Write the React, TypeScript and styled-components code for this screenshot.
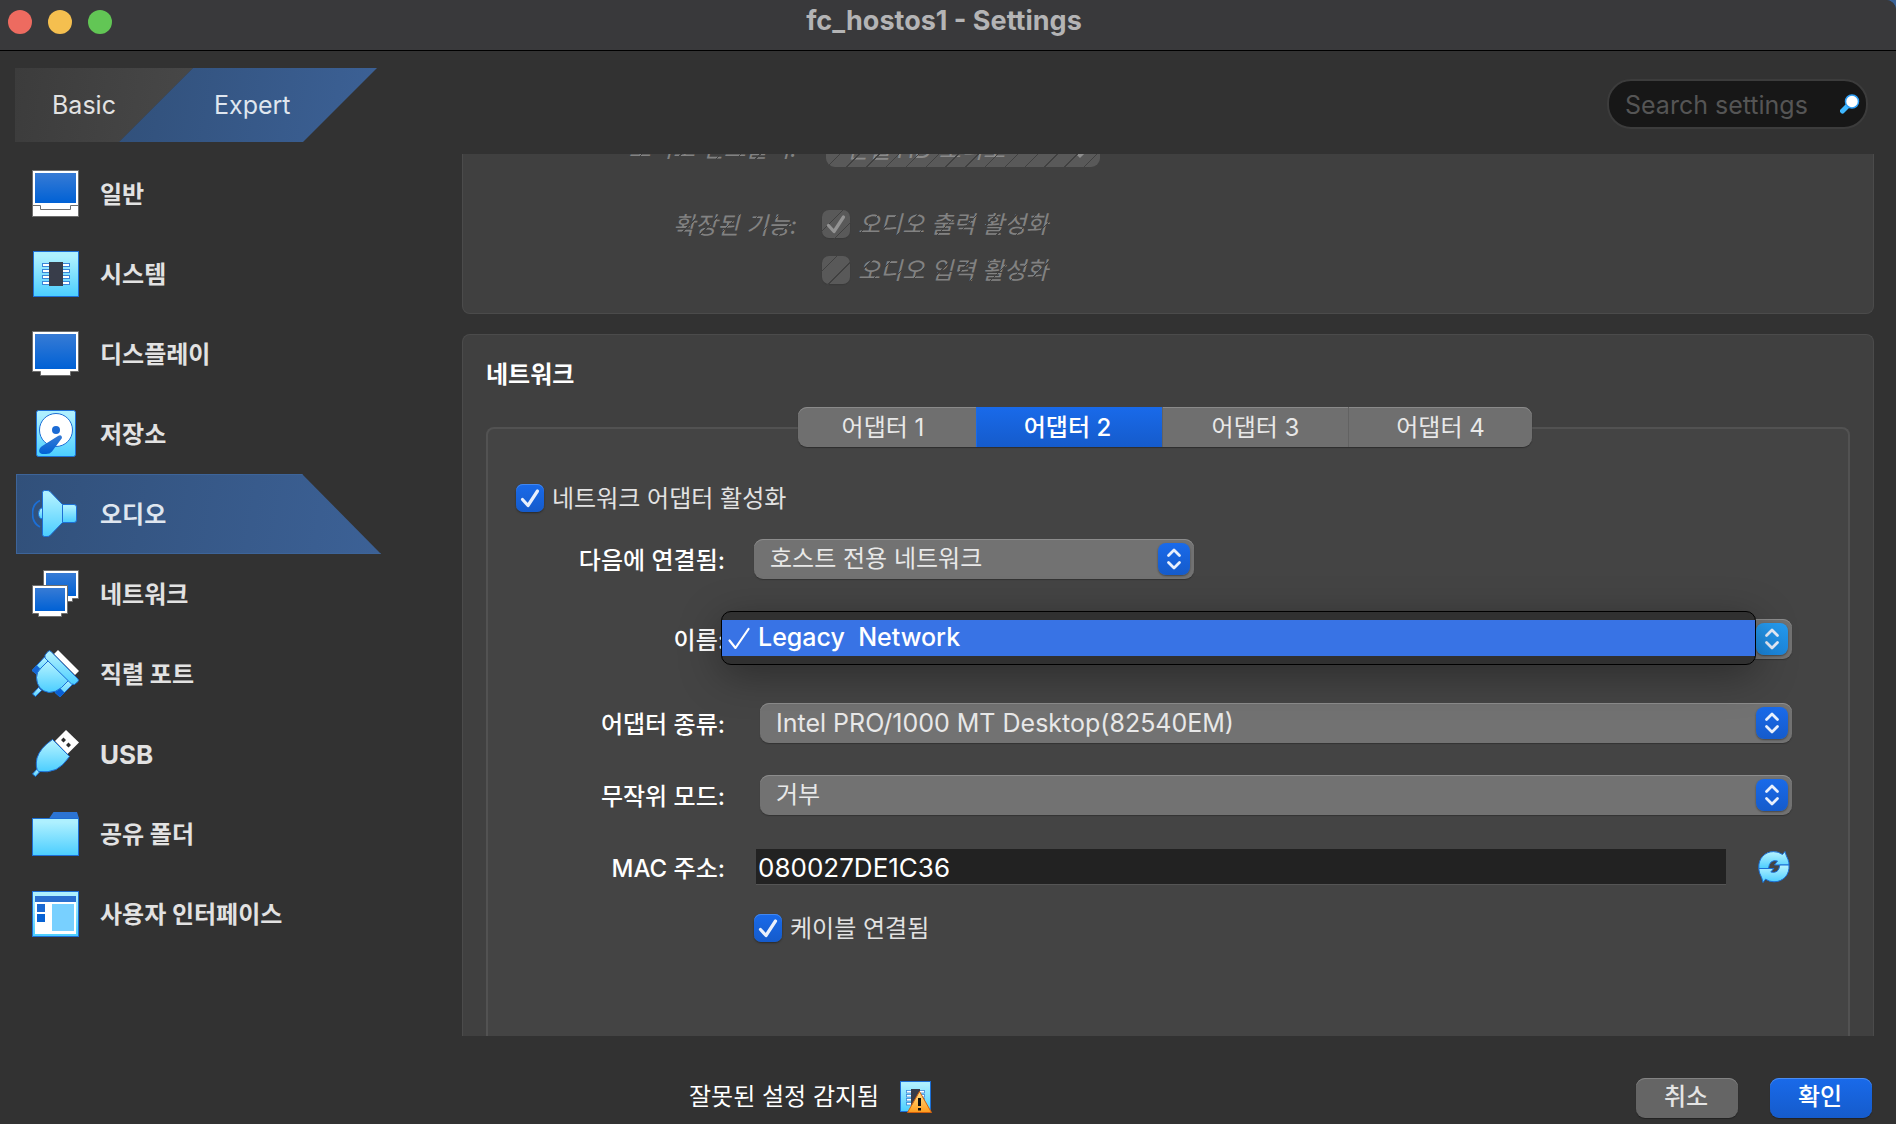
import React, { useState } from "react";
import styled, { createGlobalStyle, css } from "styled-components";

const GlobalStyle = createGlobalStyle`
  *, *::before, *::after { box-sizing: border-box; }
  body { margin: 0; background: #3a6296; }
  button, input, select { font: inherit; color: inherit; margin: 0; }
`;

const accent = "linear-gradient(#196aea, #155bcb)";
const selection = "linear-gradient(100deg, #31507a, #3c6196)";

/* ---------- window ---------- */

const Window = styled.div`
  display: flex;
  flex-direction: column;
  min-height: 100vh;
  border-top-right-radius: 10px;
  overflow: hidden;
  background: #323232;
  color: #e2e2e2;
  font-family: Inter, "Noto Sans CJK KR", sans-serif;
  font-size: 24px;
  line-height: 32px;
`;

const TitleBar = styled.header`
  display: grid;
  grid-template-columns: 1fr auto 1fr;
  height: 51px;
  padding: 0 8px;
  background: #39393b;
  border-bottom: 1px solid #000;
`;

const Lights = styled.div`
  display: flex;
  gap: 16px;
  padding-top: 10px;
`;

const Light = styled.button<{ $color: string }>`
  width: 24px;
  height: 24px;
  padding: 0;
  border: 0;
  border-radius: 50%;
  background: ${(p) => p.$color};
`;

const WindowTitle = styled.h1`
  margin: 0;
  padding: 5px 8px 0 0;
  font-size: 27px;
  line-height: 32px;
  font-weight: 700;
  color: #b4b4b5;
`;

const Header = styled.div`
  display: flex;
  justify-content: space-between;
  align-items: flex-start;
  padding: 17px 28px 12px 15px;
`;

const Modes = styled.div`
  display: flex;
  height: 74px;
`;

const Mode = styled.button<{ $active?: boolean }>`
  border: 0;
  text-align: left;
  font-size: 25px;
  ${(p) =>
    p.$active
      ? css`
          width: 258px;
          margin-left: -74px;
          padding: 0 0 0 95px;
          color: #dfe6ef;
          background: ${selection};
          clip-path: polygon(74px 0, 100% 0, 184px 100%, 0 100%);
        `
      : css`
          width: 178px;
          padding: 0 0 0 37px;
          color: #e2e2e2;
          background: linear-gradient(100deg, #3c3c3c, #484848);
          clip-path: polygon(0 0, 100% 0, 104px 100%, 0 100%);
        `}
`;

const SearchBox = styled.label`
  display: flex;
  align-items: center;
  width: 261px;
  height: 50px;
  margin-top: 11px;
  padding: 0 6px 0 16px;
  border: 2px solid #3c3c3c;
  border-radius: 24px;
  background: #171717;
`;

const SearchInput = styled.input`
  flex: 1;
  min-width: 0;
  padding: 2px 0 0;
  border: 0;
  outline: 0;
  background: none;
  font-size: 25px;
  &::placeholder { color: #555; opacity: 1; }
`;

const Body = styled.div`
  display: flex;
  flex: 1;
  min-height: 0;
`;

/* ---------- sidebar ---------- */

const Sidebar = styled.nav`
  flex: 0 0 462px;
  padding-left: 16px;
`;

const NavItem = styled.button<{ $active?: boolean }>`
  display: flex;
  align-items: center;
  gap: 20px;
  width: 365px;
  height: 80px;
  padding: 0 0 0 16px;
  border: 0;
  background: none;
  color: #e2e2e2;
  font-weight: 700;
  text-align: left;
  ${(p) =>
    p.$active &&
    css`
      background: ${selection};
      box-shadow: inset 0 0 0 1px #3d6499;
      clip-path: polygon(0 0, 286px 0, 100% 100%, 0 100%);
      color: #dfe6ef;
    `}
`;

const NavText = styled.span<{ $latin?: boolean }>`
  padding-top: 2px;
  font-size: ${(p) => (p.$latin ? 26 : 24)}px;
`;

/* ---------- panels ---------- */

const Content = styled.main`
  display: flex;
  flex: 1;
  flex-direction: column;
  gap: 20px;
  min-width: 0;
  margin-right: 22px;
  overflow: hidden;
`;

const Panel = styled.section`
  border: 1px solid #4b4b4b;
  background: #404040;
`;

const AudioPanel = styled(Panel)`
  position: relative;
  height: 160px;
  border-top: 0;
  border-radius: 0 0 8px 8px;
  overflow: hidden;
  color: #828282;
  font-style: italic;
`;

const Hatch = styled.div`
  position: absolute;
  inset: 0;
  pointer-events: none;
  background: repeating-linear-gradient(135deg, #404040 0 1px, transparent 1px 14px);
`;

const NetworkPanel = styled(Panel)`
  display: flex;
  flex: 1;
  flex-direction: column;
  padding: 24px 23px 0;
  border-bottom: 0;
  border-radius: 8px 8px 0 0;
`;

const PanelTitle = styled.h2`
  margin: 0 0 16px;
  font-size: 24px;
  line-height: 32px;
  font-weight: 700;
  color: #fff;
`;

const Tabs = styled.div`
  position: relative;
  z-index: 1;
  align-self: center;
  display: grid;
  grid-template-columns: 178px 186px 186px 184px;
  height: 40px;
  margin: 0 6px -20px 0;
  border-radius: 9px;
  overflow: hidden;
  background: #6f6f6f;
  box-shadow: 0 1px 1px #2e2e2e, inset 0 1px #8a8a8a;
`;

const Tab = styled.button<{ $active?: boolean }>`
  padding: 2px 0 0;
  border: 0;
  border-left: 1px solid #626262;
  background: none;
  color: #e8e8e8;
  &:first-child { padding-right: 8px; border-left: 0; }
  ${(p) =>
    p.$active &&
    css`
      padding-right: 4px;
      border-left-color: #196aea;
      background: ${accent};
      color: #fff;
      font-weight: 500;
    `}
`;

const Group = styled.div`
  flex: 1;
  padding: 55px 56px 0 0;
  border: 2px solid #525252;
  border-bottom: 0;
  border-radius: 8px 8px 0 0;
  background: #444;
`;

/* ---------- form ---------- */

const Row = styled.div<{ $top?: number; $indent?: number }>`
  display: flex;
  align-items: center;
  margin-top: ${(p) => p.$top ?? 0}px;
  padding-left: ${(p) => p.$indent ?? 0}px;
`;

const FieldLabel = styled.label<{ $gap?: number }>`
  flex: 0 0 237px;
  margin-right: ${(p) => p.$gap ?? 35}px;
  padding-top: 4px;
  text-align: right;
  font-weight: 500;
  color: #fff;
`;

const DimLabel = styled.label<{ $gap: number }>`
  flex: 0 0 334px;
  margin-right: ${(p) => p.$gap}px;
  padding-top: 4px;
  text-align: right;
`;

const CheckLabel = styled.label`
  display: flex;
  align-items: center;
  gap: 8px;
  height: 28px;
`;

const CheckText = styled.span`
  padding-top: 2px;
`;

const CheckCell = styled.span`
  display: grid;
  width: 28px;
  height: 28px;
  & > * { grid-area: 1 / 1; }
  & > svg { pointer-events: none; z-index: 1; }
`;

const CheckInput = styled.input`
  appearance: none;
  width: 28px;
  height: 28px;
  border-radius: 7px;
  background: #6b6b6b;
  box-shadow: 0 1px 2px rgba(0, 0, 0, 0.4);
  &:checked { background: ${accent}; box-shadow: 0 1px 2px rgba(0, 0, 0, 0.4), inset 0 1px #4287f0; }
  &:disabled { background: #595959; box-shadow: 0 1px 1px #3a3a3a; }
`;

const SelectWrap = styled.div<{ $width?: number }>`
  position: relative;
  ${(p) => (p.$width ? css`width: ${p.$width}px;` : css`flex: 1;`)}
`;

const SelectBox = styled.select<{ $latin?: boolean }>`
  display: block;
  appearance: none;
  width: 100%;
  height: 40px;
  padding: 0 40px 0 16px;
  border: 0;
  border-radius: 9px;
  background: #727272;
  box-shadow: 0 1px 1px #333, inset 0 1px #8c8c8c;
  color: #e8e8e8;
  font-size: ${(p) => (p.$latin ? 25 : 24)}px;
  &:disabled {
    padding: 6px 40px 0 20px;
    background: #595959;
    box-shadow: none;
    color: #8a8a8a;
    opacity: 1;
    font-style: italic;
  }
`;

const Stepper = styled.span<{ $open?: boolean }>`
  position: absolute;
  top: 4px;
  right: 4px;
  width: 32px;
  height: 32px;
  border-radius: 8px;
  pointer-events: none;
  background: ${(p) => (p.$open ? "linear-gradient(#259bf0, #1b86dc)" : accent)};
  box-shadow: 0 1px 2px rgba(0, 0, 0, 0.4);
  & > svg { display: block; }
`;

const DimChevron = styled.span`
  position: absolute;
  top: 4px;
  right: 10px;
  pointer-events: none;
`;

const Popup = styled.ul`
  position: absolute;
  z-index: 2;
  top: -8px;
  left: -39px;
  right: 36px;
  margin: 0;
  padding: 8px 0;
  list-style: none;
  border: 1px solid #000;
  border-radius: 10px;
  background: #303030;
  box-shadow: 0 10px 40px rgba(0, 0, 0, 0.35);
`;

const Option = styled.li`
  display: flex;
  align-items: center;
  gap: 8px;
  height: 36px;
  padding: 0 0 2px 6px;
  background: #3873e5;
  color: #fff;
  font-size: 25px;
  font-weight: 500;
  white-space: pre;
`;

const MacInput = styled.input`
  flex: 1;
  min-width: 0;
  height: 36px;
  padding: 2px 2px 0;
  border: 0;
  border-bottom: 1px solid #555;
  outline: 0;
  background: #222;
  color: #fff;
  font-size: 26px;
`;

const IconButton = styled.button`
  width: 32px;
  height: 32px;
  margin: 0 2px 0 32px;
  padding: 0;
  border: 0;
  background: none;
  & > svg { display: block; }
`;

/* ---------- footer ---------- */

const Footer = styled.footer`
  display: grid;
  grid-template-columns: 1fr auto;
  align-items: center;
  height: 88px;
  padding: 36px 24px 0 689px;
`;

const Warning = styled.div`
  display: flex;
  align-items: center;
  gap: 21px;
  height: 40px;
  padding-bottom: 2px;
  color: #fff;
`;

const Actions = styled.div`
  display: flex;
  gap: 32px;
  height: 52px;
  padding-top: 6px;
`;

const Action = styled.button<{ $primary?: boolean }>`
  width: 102px;
  height: 40px;
  padding: 0 2px 2px 0;
  border: 0;
  border-radius: 9px;
  background: ${(p) => (p.$primary ? accent : "#656565")};
  box-shadow: 0 1px 1px #222, inset 0 1px ${(p) => (p.$primary ? "#4a8cf2" : "#838383")};
  color: ${(p) => (p.$primary ? "#fff" : "#e4e4e4")};
  font-weight: 500;
`;

/* ---------- drawings ---------- */

const Defs = styled.svg`
  position: absolute;
`;

const Gradients = () => (
  <Defs width="0" height="0" aria-hidden="true">
    <defs>
      <linearGradient id="sky" x1="0" y1="0" x2="0" y2="1">
        <stop offset="0.1" stopColor="#aef0ff" />
        <stop offset="1" stopColor="#4bceff" />
      </linearGradient>
      <linearGradient id="blue" x1="0" y1="0" x2="0" y2="1">
        <stop offset="0" stopColor="#377bd5" />
        <stop offset="1" stopColor="#0061d5" />
      </linearGradient>
      <linearGradient id="amber" x1="0" y1="0" x2="0" y2="1">
        <stop offset="0" stopColor="#ffe08a" />
        <stop offset="1" stopColor="#ff9c1c" />
      </linearGradient>
    </defs>
  </Defs>
);

const edge = "#1c6fd6";
const grey = "#6e6e6e";

const art: Record<string, React.ReactNode> = {
  general: (
    <>
      <rect x="0.5" y="0.5" width="46" height="46" fill="#fff" stroke={grey} />
      <rect x="3" y="3" width="41" height="30" fill="url(#blue)" />
      <path d="M.5 35.5h8v4h30v-4h8" fill="none" stroke={grey} />
    </>
  ),
  system: (
    <>
      <rect x="1.5" y="1.5" width="45" height="45" fill="url(#sky)" stroke={edge} />
      {[13, 19, 25, 31].map((y) => (
        <rect key={y} x="10.5" y={y + 0.5} width="27" height="3" fill="#fff" stroke="#3a86d8" />
      ))}
      <rect x="17" y="12" width="14" height="24" fill="#383d4a" />
    </>
  ),
  display: (
    <>
      <path d="M.5 1.5h46v40h-8v4h-30v-4h-8z" fill="#fff" stroke={grey} />
      <rect x="3" y="4" width="41" height="35" fill="url(#blue)" />
    </>
  ),
  storage: (
    <>
      <rect x="4.5" y="0.5" width="39" height="46" rx="2" fill="url(#sky)" stroke={edge} />
      <circle cx="24" cy="20" r="16.5" fill="#fff" stroke={edge} />
      <circle cx="24" cy="20" r="4" fill="#1c6bd4" />
      <path d="M11 35.500 26 26q4-2 4 2L20 41.500q-2 2.500-6 2.500h-4q-4-1-2.500-5 1-2.500 3.500-3.500z" fill="url(#blue)" />
    </>
  ),
  audio: (
    <>
      <path d="M8 10.500C-2 15-2 32 8 37" fill="none" stroke={edge} strokeWidth="1.800" />
      <path d="M10.500 17.500q-4 1-4 6t4 5.500z" fill="url(#sky)" stroke={edge} />
      <path d="M30.500 14.500H42q2.500 0 2.500 2.500v13q0 2.500-2.500 2.500H30.500z" fill="url(#sky)" stroke={edge} />
      <path d="M10.500 2.500q0-2 2-2H15q2 0 3 1l12.500 13v18L18 45.500q-1 1-3 1h-2.500q-2 0-2-2z" fill="url(#sky)" stroke={edge} />
    </>
  ),
  network: (
    <>
      <path d="M11.500.5h35v28h-6v3h-23v-3h-6z" fill="#fff" stroke={grey} />
      <rect x="14" y="3" width="30" height="23" fill="url(#blue)" />
      <path d="M.5 15.500h35v28h-6v3h-23v-3h-6z" fill="#fff" stroke={grey} />
      <rect x="3" y="18" width="30" height="23" fill="url(#blue)" />
    </>
  ),
  serial: (
    <>
      <path d="M22 4l4-4 21 21-4 4z" fill="#fff" />
      <path d="M0 20.500 12.500 7l5 5L5 24.500z" fill="url(#sky)" stroke={edge} />
      <path d="M0 20.500 4.500 15l5 5L5 24.500z" fill="#1566d4" />
      <path d="M23 42.500 36 29l5 5-13 13z" fill="url(#sky)" stroke={edge} />
      <path d="M23 42.500l4.500-5 5 5L28 47z" fill="#0a60d4" />
      <path d="M.5 44l6-6.500 3 3-6 6z" fill="url(#sky)" stroke={edge} />
      <path d="M16.500 10.500l20 20-7 7Q24 42.500 17 42.500q-12-2-12.500-15Q4.500 22 9 18z" fill="url(#sky)" stroke={edge} />
      <path d="M13 5l3-3.500q1.500-1.500 3 0L46 29q1 1.500 0 2.500L42.500 34.500 39.500 34 13 8z" fill="url(#sky)" stroke={edge} />
    </>
  ),
  usb: (
    <>
      <path d="M34 0l13 12.500L35.500 24 23 11z" fill="#fff" />
      <path d="M31.500 7.500l2.500 2.500-2.500 2.500L29 10zM36.500 12.500l2.500 2.500-2.500 2.500L34 15z" fill="#2c2c2c" />
      <path d="M.5 44l5-5.500 2.500 3-4.500 5z" fill="url(#sky)" stroke={edge} />
      <path d="M20.500 9.500l17 17Q31 36 24 39.500 16 43 6.500 41.500 3 38 5 28 8 18 20.500 9.500z" fill="url(#sky)" stroke={edge} />
    </>
  ),
  folder: (
    <>
      <path d="M17 8.500 21.500 2H45l2 6.500z" fill="#2b74d4" />
      <rect x="0.5" y="8.500" width="46" height="37" fill="url(#sky)" stroke={edge} />
    </>
  ),
  ui: (
    <>
      <rect x="0.5" y="1.500" width="46" height="45" fill="url(#sky)" stroke={edge} />
      <rect x="3" y="12" width="41" height="32" fill="#fff" />
      <rect x="3" y="6" width="41" height="6" fill="#2b70cf" />
      <rect x="5" y="14" width="8" height="8" fill="#1a69d2" />
      <rect x="5" y="24" width="8" height="8" fill="#0762d4" />
      <rect x="20" y="14" width="22" height="27" fill="#78d0ff" />
    </>
  ),
};

const NavIcon = ({ name }: { name: string }) => (
  <svg width="48" height="48" viewBox="0 0 48 48" aria-hidden="true">
    {art[name]}
  </svg>
);

const Chevrons = () => (
  <svg width="32" height="32" viewBox="0 0 32 32" fill="none" stroke="#e9f0fc" strokeWidth="2.800" strokeLinecap="round" strokeLinejoin="round" aria-hidden="true">
    <path d="M10.500 12.500 16 7l5.500 5.500M10.500 19.500 16 25l5.500-5.500" />
  </svg>
);

const Tick = ({ color }: { color: string }) => (
  <svg width="28" height="28" viewBox="0 0 28 28" fill="none" stroke={color} strokeWidth="3.200" strokeLinecap="round" strokeLinejoin="round" aria-hidden="true">
    <path d="M6.500 15.500 12 21.500 21.500 7" />
  </svg>
);

const RefreshIcon = () => (
  <svg width="32" height="32" viewBox="0 0 32 32" fill="url(#sky)" stroke={edge} aria-hidden="true">
    <path d="M.8 17.500C0 7.500 7 .6 15.500.6q5 0 9 2.900L27 .5q.8 3.500 3 8 1.200 3 1 5.500H16.500l3-4q-8-2-9 7.500z" />
    <path d="M31 14c.8 10-6 16.800-15 16.800q-4.500 0-8.500-2.600L5 31.500q-.800-4.500-3.200-9-.8-2.500-1-5h15l-3 3.500q8 2 9-7z" />
  </svg>
);

const WarningIcon = () => (
  <svg width="32" height="32" viewBox="0 0 32 32" aria-hidden="true">
    <rect x="0.5" y="0.5" width="30" height="30" fill="url(#sky)" stroke={edge} />
    {[9, 13, 17, 21].map((y) => (
      <rect key={y} x="6.500" y={y + 0.5} width="18" height="2.500" fill="#fff" stroke="#3a86d8" strokeWidth="0.800" />
    ))}
    <rect x="11" y="8" width="9" height="16" fill="#383d4a" />
    <path d="M19.500 10.500 31.500 31.500H7.500z" fill="url(#amber)" stroke="#d4600c" strokeLinejoin="round" />
    <path d="M18 17h3v8h-3zM18 27h3v2.500h-3z" fill="#111" />
  </svg>
);

const SearchIcon = () => (
  <svg width="20" height="20" viewBox="0 0 20 20" aria-hidden="true">
    <path d="M2.500 17 8 11.500" stroke="#3fb8ff" strokeWidth="5" strokeLinecap="round" />
    <circle cx="12" cy="7.500" r="6.500" fill="#fff" stroke="#2c9df5" strokeWidth="1.500" />
  </svg>
);

/* ---------- parts ---------- */

const CheckField = ({ label, initial, disabled }: { label: string; initial: boolean; disabled?: boolean }) => {
  const [on, setOn] = useState(initial);
  return (
    <CheckLabel>
      <CheckCell>
        <CheckInput type="checkbox" checked={on} disabled={disabled} onChange={(e) => setOn(e.target.checked)} />
        {on && <Tick color={disabled ? "#939393" : "#e9f0fc"} />}
      </CheckCell>
      <CheckText>{label}</CheckText>
    </CheckLabel>
  );
};

type SelectProps = { id: string; value: string; width?: number; open?: boolean; latin?: boolean };

const SelectField = ({ id, value, width, open, latin }: SelectProps) => (
  <SelectWrap $width={width}>
    <SelectBox id={id} $latin={latin}>
      <option>{value}</option>
    </SelectBox>
    <Stepper $open={open}>
      <Chevrons />
    </Stepper>
    {open && (
      <Popup role="listbox">
        <Option role="option" aria-selected="true">
          <svg width="22" height="24" viewBox="0 0 22 24" fill="none" stroke="#fff" strokeWidth="2.200" strokeLinecap="round" strokeLinejoin="round" aria-hidden="true">
            <path d="M1.500 15.500 7.500 23 20.500 4" />
          </svg>
          {value}
        </Option>
      </Popup>
    )}
  </SelectWrap>
);

const sections = [
  ["general", "일반"],
  ["system", "시스템"],
  ["display", "디스플레이"],
  ["storage", "저장소"],
  ["audio", "오디오"],
  ["network", "네트워크"],
  ["serial", "직렬 포트"],
  ["usb", "USB"],
  ["folder", "공유 폴더"],
  ["ui", "사용자 인터페이스"],
];

export default function App() {
  const [section, setSection] = useState("audio");
  const [adapter, setAdapter] = useState(2);
  return (
    <Window>
      <GlobalStyle />
      <Gradients />
      <TitleBar>
        <Lights>
          <Light $color="#ed6b60" aria-label="Close" />
          <Light $color="#f5bf4f" aria-label="Minimize" />
          <Light $color="#62c655" aria-label="Zoom" />
        </Lights>
        <WindowTitle>fc_hostos1 - Settings</WindowTitle>
      </TitleBar>
      <Header>
        <Modes>
          <Mode>Basic</Mode>
          <Mode $active>Expert</Mode>
        </Modes>
        <SearchBox>
          <SearchInput type="text" placeholder="Search settings" aria-label="Search settings" />
          <SearchIcon />
        </SearchBox>
      </Header>
      <Body>
        <Sidebar>
          {sections.map(([name, label]) => (
            <NavItem key={name} $active={name === section} onClick={() => setSection(name)}>
              <NavIcon name={name} />
              <NavText $latin={name === "usb"}>{label}</NavText>
            </NavItem>
          ))}
        </Sidebar>
        <Content>
          <AudioPanel>
            <Row $top={-27}>
              <DimLabel htmlFor="controller" $gap={29}>오디오 컨트롤러:</DimLabel>
              <SelectWrap $width={274}>
                <SelectBox id="controller" disabled>
                  <option>인텔 HD 오디오</option>
                </SelectBox>
                <DimChevron>
                  <svg width="20" height="32" viewBox="0 0 20 32" fill="none" stroke="#8e8e8e" strokeWidth="3" strokeLinecap="round" aria-hidden="true">
                    <path d="M5 20l5 5 5-5" />
                  </svg>
                </DimChevron>
              </SelectWrap>
            </Row>
            <Row $top={39}>
              <DimLabel as="span" $gap={25}>확장된 기능:</DimLabel>
              <CheckField label="오디오 출력 활성화" initial disabled />
            </Row>
            <Row $top={14} $indent={359}>
              <CheckField label="오디오 입력 활성화" initial={false} disabled />
            </Row>
            <Hatch />
          </AudioPanel>
          <NetworkPanel>
            <PanelTitle>네트워크</PanelTitle>
            <Tabs role="tablist">
              {[1, 2, 3, 4].map((n) => (
                <Tab key={n} role="tab" aria-selected={n === adapter} $active={n === adapter} onClick={() => setAdapter(n)}>
                  어댑터 {n}
                </Tab>
              ))}
            </Tabs>
            <Group>
              <Row $indent={28}>
                <CheckField label="네트워크 어댑터 활성화" initial />
              </Row>
              <Row $top={27}>
                <FieldLabel htmlFor="attached" $gap={29}>다음에 연결됨:</FieldLabel>
                <SelectField id="attached" value="호스트 전용 네트워크" width={440} />
              </Row>
              <Row $top={40}>
                <FieldLabel htmlFor="name">이름:</FieldLabel>
                <SelectField id="name" value="Legacy  Network" open latin />
              </Row>
              <Row $top={44}>
                <FieldLabel htmlFor="type">어댑터 종류:</FieldLabel>
                <SelectField id="type" value="Intel PRO/1000 MT Desktop(82540EM)" latin />
              </Row>
              <Row $top={32}>
                <FieldLabel htmlFor="promiscuous">무작위 모드:</FieldLabel>
                <SelectField id="promiscuous" value="거부" />
              </Row>
              <Row $top={34}>
                <FieldLabel htmlFor="mac" $gap={31}>MAC 주소:</FieldLabel>
                <MacInput id="mac" type="text" defaultValue="080027DE1C36" />
                <IconButton aria-label="Generate MAC address">
                  <RefreshIcon />
                </IconButton>
              </Row>
              <Row $top={29} $indent={266}>
                <CheckField label="케이블 연결됨" initial />
              </Row>
            </Group>
          </NetworkPanel>
        </Content>
      </Body>
      <Footer>
        <Warning>
          잘못된 설정 감지됨
          <WarningIcon />
        </Warning>
        <Actions>
          <Action>취소</Action>
          <Action $primary>확인</Action>
        </Actions>
      </Footer>
    </Window>
  );
}
